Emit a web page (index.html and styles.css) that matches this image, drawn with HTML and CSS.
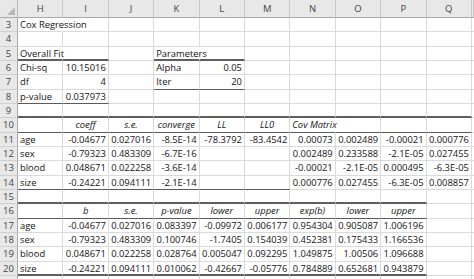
FILE: index.html
```html
<!DOCTYPE html>
<html>
<head>
<meta charset="utf-8">
<link rel="stylesheet" href="styles.css">
</head>
<body>
<div class="sheet">
  <div class="corner"><span class="tri"></span></div>
  <div class="ch">H</div><div class="ch">I</div><div class="ch">J</div><div class="ch">K</div><div class="ch">L</div><div class="ch">M</div><div class="ch">N</div><div class="ch">O</div><div class="ch">P</div><div class="ch">Q</div><div class="ch"></div>

  <div class="rh">3</div><div class="c nr">Cox Regression</div><div class="c"></div><div class="c"></div><div class="c"></div><div class="c"></div><div class="c"></div><div class="c"></div><div class="c"></div><div class="c"></div><div class="c"></div><div class="f"></div>

  <div class="rh">4</div><div class="c"></div><div class="c"></div><div class="c"></div><div class="c"></div><div class="c"></div><div class="c"></div><div class="c"></div><div class="c"></div><div class="c"></div><div class="c"></div><div class="f"></div>

  <div class="rh">5</div><div class="c nr tb">Overall Fit</div><div class="c tb"></div><div class="c"></div><div class="c nr tb">Parameters</div><div class="c tb"></div><div class="c"></div><div class="c"></div><div class="c"></div><div class="c"></div><div class="c"></div><div class="f"></div>

  <div class="rh">6</div><div class="c">Chi-sq</div><div class="c n">10.15016</div><div class="c"></div><div class="c">Alpha</div><div class="c n">0.05</div><div class="c"></div><div class="c"></div><div class="c"></div><div class="c"></div><div class="c"></div><div class="f"></div>

  <div class="rh">7</div><div class="c">df</div><div class="c n">4</div><div class="c"></div><div class="c db">Iter</div><div class="c n db">20</div><div class="c"></div><div class="c"></div><div class="c"></div><div class="c"></div><div class="c"></div><div class="f"></div>

  <div class="rh">8</div><div class="c db">p-value</div><div class="c n db">0.037973</div><div class="c"></div><div class="c"></div><div class="c"></div><div class="c"></div><div class="c"></div><div class="c"></div><div class="c"></div><div class="c"></div><div class="f"></div>

  <div class="rh">9</div><div class="c tb"></div><div class="c tb"></div><div class="c tb"></div><div class="c tb"></div><div class="c tb"></div><div class="c tb"></div><div class="c tb"></div><div class="c tb"></div><div class="c tb"></div><div class="c tb"></div><div class="f"></div>

  <div class="rh">10</div><div class="c db"></div><div class="c h db">coeff</div><div class="c h db">s.e.</div><div class="c h db">converge</div><div class="c h db">LL</div><div class="c h db">LL0</div><div class="c it nr db">Cov Matrix</div><div class="c db"></div><div class="c db"></div><div class="c db"></div><div class="f"></div>

  <div class="rh">11</div><div class="c">age</div><div class="c n">-0.04677</div><div class="c n">0.027016</div><div class="c n">-8.5E-14</div><div class="c n">-78.3792</div><div class="c n">-83.4542</div><div class="c n">0.00073</div><div class="c n">0.002489</div><div class="c n">-0.00021</div><div class="c n">0.000776</div><div class="f"></div>

  <div class="rh">12</div><div class="c">sex</div><div class="c n">-0.79323</div><div class="c n">0.483309</div><div class="c n">-6.7E-16</div><div class="c"></div><div class="c"></div><div class="c n">0.002489</div><div class="c n">0.233588</div><div class="c n">-2.1E-05</div><div class="c n">0.027455</div><div class="f"></div>

  <div class="rh">13</div><div class="c">blood</div><div class="c n">0.048671</div><div class="c n">0.022258</div><div class="c n">-3.6E-14</div><div class="c"></div><div class="c"></div><div class="c n">-0.00021</div><div class="c n">-2.1E-05</div><div class="c n">0.000495</div><div class="c n">-6.3E-05</div><div class="f"></div>

  <div class="rh">14</div><div class="c db">size</div><div class="c n db">-0.24221</div><div class="c n db">0.094111</div><div class="c n db">-2.1E-14</div><div class="c db"></div><div class="c db"></div><div class="c n">0.000776</div><div class="c n">0.027455</div><div class="c n">-6.3E-05</div><div class="c n">0.008857</div><div class="f"></div>

  <div class="rh">15</div><div class="c tb"></div><div class="c tb"></div><div class="c tb"></div><div class="c tb"></div><div class="c tb"></div><div class="c tb"></div><div class="c tb"></div><div class="c tb"></div><div class="c tb"></div><div class="c"></div><div class="f"></div>

  <div class="rh">16</div><div class="c db"></div><div class="c h db">b</div><div class="c h db">s.e.</div><div class="c h db">p-value</div><div class="c h db">lower</div><div class="c h db">upper</div><div class="c h db">exp(b)</div><div class="c h db">lower</div><div class="c h db">upper</div><div class="c"></div><div class="f"></div>

  <div class="rh">17</div><div class="c">age</div><div class="c n">-0.04677</div><div class="c n">0.027016</div><div class="c n">0.083397</div><div class="c n">-0.09972</div><div class="c n">0.006177</div><div class="c n">0.954304</div><div class="c n">0.905087</div><div class="c n">1.006196</div><div class="c"></div><div class="f"></div>

  <div class="rh">18</div><div class="c">sex</div><div class="c n">-0.79323</div><div class="c n">0.483309</div><div class="c n">0.100746</div><div class="c n">-1.7405</div><div class="c n">0.154039</div><div class="c n">0.452381</div><div class="c n">0.175433</div><div class="c n">1.166536</div><div class="c"></div><div class="f"></div>

  <div class="rh">19</div><div class="c">blood</div><div class="c n">0.048671</div><div class="c n">0.022258</div><div class="c n">0.028764</div><div class="c n">0.005047</div><div class="c n">0.092295</div><div class="c n">1.049875</div><div class="c n">1.00506</div><div class="c n">1.096688</div><div class="c"></div><div class="f"></div>

  <div class="rh">20</div><div class="c tb">size</div><div class="c n tb">-0.24221</div><div class="c n tb">0.094111</div><div class="c n tb">0.010062</div><div class="c n tb">-0.42667</div><div class="c n tb">-0.05776</div><div class="c n tb">0.784889</div><div class="c n tb">0.652681</div><div class="c n tb">0.943879</div><div class="c"></div><div class="f"></div>

  <div class="rh"></div><div class="c"></div><div class="c"></div><div class="c"></div><div class="c"></div><div class="c"></div><div class="c"></div><div class="c"></div><div class="c"></div><div class="c"></div><div class="c"></div><div class="f"></div>
</div>
</body>
</html>
```

FILE: styles.css
```css
html, body {
  margin: 0;
  padding: 0;
  background: #ffffff;
  overflow: hidden;
}

.sheet {
  display: grid;
  grid-template-columns: 18px repeat(10, 45.4px) 1fr;
  grid-template-rows: 18px;
  grid-auto-rows: 14.333px;
  width: 474px;
  height: 279px;
  overflow: hidden;
  font-family: "Open Sans", "Liberation Sans", sans-serif;
  font-size: 9.4px;
  color: #141414;
}

.sheet > div {
  box-sizing: border-box;
  white-space: nowrap;
}

.corner {
  position: relative;
  background: #e8e8e8;
  border-right: 1px solid #bcbcbc;
  border-bottom: 1px solid #a9a9a9;
}

.tri {
  position: absolute;
  right: 2px;
  bottom: 2px;
  width: 0;
  height: 0;
  border-left: 8px solid transparent;
  border-bottom: 8px solid #b8b8b8;
}

.ch {
  background: #e8e8e8;
  border-right: 1px solid #c8c8c8;
  border-bottom: 1px solid #a9a9a9;
  text-align: center;
  color: #444444;
  font-size: 9.5px;
  line-height: 18px;
}

.rh {
  background: #e8e8e8;
  border-right: 1px solid #a9a9a9;
  border-bottom: 1px solid #d0d0d0;
  text-align: center;
  color: #444444;
  font-size: 9.5px;
  line-height: 14px;
}

.c {
  border-right: 1px solid #dadada;
  border-bottom: 1px solid #dadada;
  padding: 0 2px;
  line-height: 14px;
  overflow: visible;
}

.f {
  border-bottom: 1px solid #dadada;
}

.n {
  text-align: right;
}

.h {
  text-align: center;
  font-style: italic;
}

.it {
  font-style: italic;
}

.nr {
  border-right-color: transparent;
}

.tb {
  border-bottom: 2px solid #5e5e5e;
}

.db {
  border-bottom: 1px solid #5a5a5a;
}
```
